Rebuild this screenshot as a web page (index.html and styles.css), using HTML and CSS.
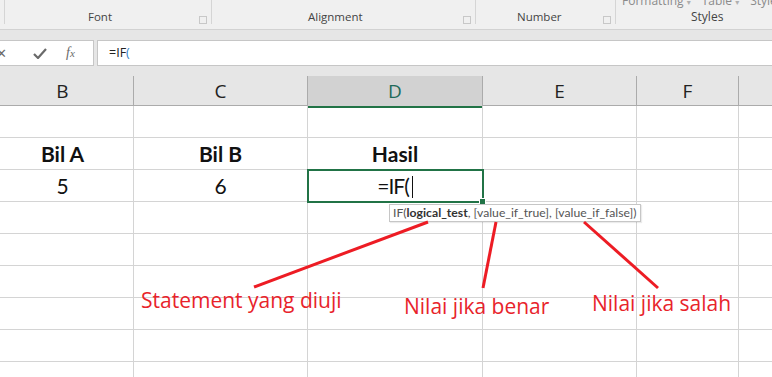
FILE: index.html
```html
<!DOCTYPE html>
<html lang="en">
  <head>
    <meta charset="UTF-8" />
    <meta name="viewport" content="width=device-width, initial-scale=1.0" />
    <title>Fungsi IF</title>
    <link rel="stylesheet" href="styles.css">
  </head>
  <body>
    <div class="ribbon">
      <div class="group group-edge"></div>
      <div class="group group-font">
        <span class="group-label">Font</span>
        <span class="launcher"></span>
      </div>
      <div class="group group-align">
        <span class="group-label">Alignment</span>
        <span class="launcher"></span>
      </div>
      <div class="group group-number">
        <span class="group-label">Number</span>
        <span class="launcher"></span>
      </div>
      <div class="group group-styles">
        <div class="style-buttons">
          <span>Formatting <small>&#9662;</small></span>
          <span>Table <small>&#9662;</small></span>
          <span>Styles</span>
        </div>
        <span class="group-label">Styles</span>
      </div>
    </div>

    <div class="formula-row">
      <div class="name-tools">
        <span class="tool tool-x">&#10005;</span>
        <span class="tool tool-ok">
          <svg width="14" height="11" viewBox="0 0 14 11"><path d="M1 6 L5 10 L13 1" fill="none" stroke="#6a6a6a" stroke-width="2.2"/></svg>
        </span>
        <span class="tool tool-fx"><i>f</i><i>x</i></span>
      </div>
      <div class="formula-input">=IF<span class="paren">(</span></div>
    </div>

    <div class="sheet">
      <div class="col-headers">
        <div class="col-head col-b">B</div>
        <div class="col-head col-c">C</div>
        <div class="col-head col-d active">D</div>
        <div class="col-head col-e">E</div>
        <div class="col-head col-f">F</div>
        <div class="col-head col-g"></div>
      </div>

      <div class="grid">
        <div class="cell col-b"></div><div class="cell"></div><div class="cell"></div><div class="cell"></div><div class="cell"></div><div class="cell"></div>

        <div class="cell col-b bold">Bil A</div><div class="cell bold">Bil B</div><div class="cell bold">Hasil</div><div class="cell"></div><div class="cell"></div><div class="cell"></div>

        <div class="cell col-b">5</div><div class="cell">6</div>
        <div class="cell selected"><span class="entry">=IF(</span><span class="cursor"></span>
          <span class="fill-handle"></span>
          <div class="tooltip">IF(<b>logical_test</b>, [value_if_true], [value_if_false])</div>
        </div>
        <div class="cell"></div><div class="cell"></div><div class="cell"></div>

        <div class="cell"></div><div class="cell"></div><div class="cell"></div><div class="cell"></div><div class="cell"></div><div class="cell"></div>
        <div class="cell"></div><div class="cell"></div><div class="cell"></div><div class="cell"></div><div class="cell"></div><div class="cell"></div>
        <div class="cell"></div><div class="cell"></div><div class="cell"></div><div class="cell"></div><div class="cell"></div><div class="cell"></div>
        <div class="cell"></div><div class="cell"></div><div class="cell"></div><div class="cell"></div><div class="cell"></div><div class="cell"></div>
        <div class="cell"></div><div class="cell"></div><div class="cell"></div><div class="cell"></div><div class="cell"></div><div class="cell"></div>
        <div class="cell"></div><div class="cell"></div><div class="cell"></div><div class="cell"></div><div class="cell"></div><div class="cell"></div>
      </div>

      <!-- annotations drawn on top of the sheet -->
      <svg class="arrows" width="772" height="301" viewBox="0 76 772 301">
        <line x1="428" y1="222" x2="254" y2="287" />
        <line x1="496" y1="222" x2="483" y2="288" />
        <line x1="584" y1="222" x2="658" y2="288" />
      </svg>
      <span class="note note-test">Statement yang diuji</span>
      <span class="note note-true">Nilai jika benar</span>
      <span class="note note-false">Nilai jika salah</span>
    </div>
  </body>
</html>
```

FILE: styles.css
```css
body {
  margin: 0;
  width: 772px;
  height: 377px;
  overflow: hidden;
  background-color: #e6e6e6;
  font-family: "Open Sans", "DejaVu Sans", sans-serif;
}

/* ribbon */
.ribbon {
  display: flex;
  height: 29px;
  background-color: #f0f0f0;
  border-bottom: 1px solid #d2d2d2;
  overflow: hidden;
}
.group {
  position: relative;
  display: flex;
  align-items: flex-end;
  border-right: 1px solid #d5d5d5;
  height: 24px;
  flex-shrink: 0;
}
.group-edge {
  width: 4px;
}
.group-font {
  width: 206px;
}
.group-align {
  width: 263px;
}
.group-number {
  width: 139px;
}
.group-styles {
  width: 200px;
  border-right: none;
  flex-direction: column;
  align-items: flex-start;
  justify-content: space-between;
}
.group-label {
  font-size: 11.5px;
  color: #444;
  line-height: 14px;
}
.group-font .group-label {
  margin-left: 83px;
}
.group-align .group-label {
  margin-left: 96px;
}
.group-number .group-label {
  margin-left: 41px;
}
.group-styles .group-label {
  margin-left: 75px;
  font-size: 12px;
}
.launcher {
  position: absolute;
  right: 4px;
  bottom: 0;
  width: 6px;
  height: 6px;
  border: 1px solid #c8c8c8;
}
.style-buttons {
  display: flex;
  gap: 11px;
  margin-top: -6px;
  margin-left: 6px;
  font-size: 12px;
  line-height: 13px;
  color: #8a8a8a;
  white-space: nowrap;
}
.style-buttons small {
  font-size: 8px;
  color: #b0b0b0;
}

/* formula bar */
.formula-row {
  display: flex;
  gap: 3px;
  padding-top: 10px;
  height: 26px;
}
.name-tools {
  width: 93px;
  height: 24px;
  background-color: #fff;
  border: 1px solid #c6c6c6;
  border-left: none;
  display: flex;
  align-items: center;
  color: #6a6a6a;
}
.tool-x {
  font-size: 13px;
  margin-left: -4px;
  width: 37px;
}
.tool-ok {
  width: 33px;
  display: flex;
}
.tool-fx {
  font-family: "Liberation Serif", serif;
  font-size: 14px;
}
.tool-fx i:last-child {
  font-size: 11px;
}
.formula-input {
  flex: 1;
  height: 24px;
  background-color: #fff;
  border: 1px solid #c6c6c6;
  border-right: none;
  font-size: 12.5px;
  line-height: 24px;
  padding-left: 11px;
  color: #222;
}
.paren {
  color: #2f7fc9;
}

/* sheet */
.sheet {
  position: relative;
  margin-top: 10px;
}
.col-headers {
  display: grid;
  grid-template-columns: 134px 174px 175px 154px 102px 40px;
  height: 29px;
  border-bottom: 1px solid #ababab;
}
.col-head {
  border-right: 1px solid #ababab;
  text-align: center;
  font-size: 19px;
  line-height: 30px;
  color: #222;
}
.col-b {
  padding-right: 8px;
}
.col-head.active {
  background-color: #d2d2d2;
  border-bottom: 2px solid #217346;
  margin-bottom: -1px;
  color: #1e6a5a;
}
.grid {
  display: grid;
  grid-template-columns: 134px 174px 175px 154px 102px 40px;
  grid-auto-rows: 32px;
  background-color: #fff;
}
.cell {
  position: relative;
  border-right: 1px solid #d4d4d4;
  border-bottom: 1px solid #d4d4d4;
  text-align: center;
  font-family: "Lato", "Liberation Sans", sans-serif;
  font-size: 21px;
  line-height: 31px;
  color: #111;
}
.cell.bold {
  font-weight: 700;
}
.cell.selected {
  outline: 2px solid #217346;
  outline-offset: -1px;
  z-index: 1;
}
.entry {
  letter-spacing: -1px;
}
.cursor {
  display: inline-block;
  width: 1px;
  height: 22px;
  margin-left: 3px;
  background-color: #111;
  vertical-align: -4px;
}
.fill-handle {
  position: absolute;
  right: -4px;
  bottom: -4px;
  width: 5px;
  height: 5px;
  background-color: #217346;
  border: 1px solid #fff;
}
.tooltip {
  position: absolute;
  left: 81px;
  top: 34px;
  height: 16px;
  padding: 0 3px;
  background-color: #fff;
  border: 1px solid #c6c6c6;
  box-shadow: 1px 1px 1px rgba(0, 0, 0, 0.08);
  font-family: "Lato", "Liberation Sans", sans-serif;
  font-size: 12.2px;
  line-height: 16px;
  color: #555;
  white-space: nowrap;
  text-align: left;
  z-index: 2;
}
.tooltip b {
  color: #333;
}

/* annotations */
.arrows {
  position: absolute;
  left: 0;
  top: 0;
  z-index: 3;
}
.arrows line {
  stroke: #ed1c24;
  stroke-width: 3;
}
.note {
  position: absolute;
  color: #e8232b;
  font-size: 21px;
  line-height: 24px;
  white-space: nowrap;
  z-index: 3;
}
.note-test {
  left: 141px;
  top: 212px;
}
.note-true {
  left: 404px;
  top: 218px;
}
.note-false {
  left: 592px;
  top: 215px;
}
```
